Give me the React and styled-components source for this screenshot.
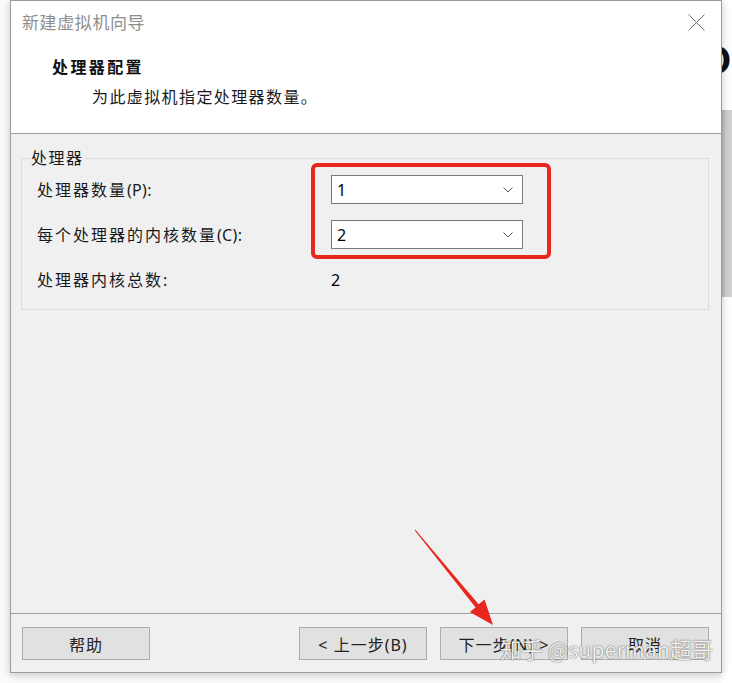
import React from "react";
import styled, { createGlobalStyle } from "styled-components";

const Global = createGlobalStyle`
  html, body { margin: 0; padding: 0; background: #fff; }
  #root { width: 732px; height: 683px; }
`;

const FONT = `"Noto Sans", "Noto Sans CJK SC", sans-serif`;

const Page = styled.div`
  position: relative;
  width: 732px;
  height: 683px;
  overflow: hidden;
  display: flex;
  background: #fbfbfb;
  font-family: ${FONT};
`;

const Window = styled.div`
  flex-shrink: 0;
  margin-left: 10px;
  width: 712px;
  height: 673px;
  box-sizing: border-box;
  border: 1px solid #9c9c9c;
  box-shadow: 0 2px 8px rgba(0, 0, 0, 0.22);
  display: flex;
  flex-direction: column;
  background: #f0f0f0;
  position: relative;
  z-index: 1;
`;

const Backdrop = styled.div`
  flex: 1;
  overflow: hidden;
  display: flex;
  flex-direction: column;
  background: #fff;
`;

const BackGlyph = styled.div`
  margin-top: 36px;
  margin-left: -22px;
  height: 74px;
  font: bold 40px/48px "Liberation Sans", sans-serif;
  color: #111;
`;

const BackPanel = styled.div`
  height: 187px;
  background: linear-gradient(90deg, #b9b9b9 0, #cfcfcf 4px, #d2d2d2 100%);
`;

const TopPane = styled.div`
  height: 132px;
  background: #fff;
  border-bottom: 1px solid #a0a0a0;
  display: flex;
  flex-direction: column;
`;

const TitleBar = styled.div`
  height: 43px;
  display: flex;
  align-items: center;
  justify-content: space-between;
  padding: 0 16px 0 11px;
`;

const Title = styled.div`
  font-size: 17px;
  line-height: 20px;
  color: #8e8e8e;
  letter-spacing: 0.6px;
`;

const Heading = styled.div`
  margin-top: 13px;
  padding-left: 41px;
  font-size: 16px;
  line-height: 20px;
  font-weight: 700;
  letter-spacing: 2.4px;
  color: #111;
`;

const Subtitle = styled.div`
  margin-top: 10px;
  padding-left: 81px;
  font-size: 16px;
  line-height: 20px;
  letter-spacing: 1.4px;
  color: #1a1a1a;
`;

const Body = styled.div`
  flex: 1;
  padding: 15px 12px 0 10px;
`;

const Group = styled.fieldset`
  margin: 0;
  border: 1px solid #dcdcdc;
  padding: 8px 13px 15px 15px;
  min-inline-size: 0;
`;

const Legend = styled.legend`
  font-size: 16px;
  line-height: 18px;
  padding: 0 1px;
  margin-left: -7px;
  letter-spacing: 1.5px;
  color: #1a1a1a;
`;

const Rows = styled.div`
  display: flex;
  flex-direction: column;
  gap: 16px;
`;

const Row = styled.div`
  display: grid;
  grid-template-columns: 294px 192px;
  align-items: center;
  height: 29px;
`;

const Label = styled.div`
  font-size: 16px;
  line-height: 20px;
  letter-spacing: 2px;
  color: #1a1a1a;
`;

const Combo = styled.div`
  box-sizing: border-box;
  height: 29px;
  border: 1px solid #7a7a7a;
  background: #fff;
  display: flex;
  align-items: center;
  justify-content: space-between;
  padding: 0 9px 0 5px;
  font-size: 16px;
  color: #000;
`;

const Value = styled.div`
  font-size: 16px;
  color: #000;
`;

const Footer = styled.div`
  box-sizing: border-box;
  height: 59px;
  border-top: 1px solid #a0a0a0;
  display: flex;
  align-items: flex-start;
  gap: 13px;
  padding: 13px 12px 0 11px;
`;

const Button = styled.button`
  width: 128px;
  height: 33px;
  margin-right: ${(p) => (p.$push ? "auto" : "0")};
  border: 1px solid #adadad;
  background: #e1e1e1;
  font-family: ${FONT};
  font-size: 16px;
  letter-spacing: 1px;
  color: #222;
  padding: 0;
  display: flex;
  align-items: center;
  justify-content: center;
`;

const RedBox = styled.div`
  position: absolute;
  left: 311px;
  top: 163px;
  width: 240px;
  height: 96px;
  box-sizing: border-box;
  border: 4px solid #e8271f;
  border-radius: 6px;
  z-index: 2;
`;

const Arrow = styled.svg`
  position: absolute;
  left: 0;
  top: 0;
  z-index: 3;
  pointer-events: none;
`;

const Watermark = styled.div`
  position: absolute;
  left: 500px;
  top: 634px;
  z-index: 4;
  font-family: "Noto Sans CJK SC", "Noto Sans", sans-serif;
  font-size: 21.5px;
  line-height: 30px;
  color: rgba(255, 255, 255, 0.92);
  text-shadow: 0 0 1px rgba(0, 0, 0, 0.55), 0 0 2px rgba(0, 0, 0, 0.35);
  white-space: nowrap;
`;

const Chevron = () => (
  <svg width="10" height="6" viewBox="0 0 10 6">
    <polyline points="0.5,0.5 5,5 9.5,0.5" fill="none" stroke="#555" strokeWidth="1" />
  </svg>
);

const Close = () => (
  <svg width="17" height="17" viewBox="0 0 17 17">
    <path d="M0.5 0.5 L16.5 16.5 M16.5 0.5 L0.5 16.5" stroke="#6f6f6f" strokeWidth="1" />
  </svg>
);

const Latin = styled.span`
  letter-spacing: 0.3px;
`;

export default function App() {
  return (
    <>
      <Global />
      <Page>
        <Window>
          <TopPane>
            <TitleBar>
              <Title>新建虚拟机向导</Title>
              <Close />
            </TitleBar>
            <Heading>处理器配置</Heading>
            <Subtitle>为此虚拟机指定处理器数量。</Subtitle>
          </TopPane>
          <Body>
            <Group>
              <Legend>处理器</Legend>
              <Rows>
                <Row>
                  <Label>
                    处理器数量<Latin>(P):</Latin>
                  </Label>
                  <Combo>
                    <span>1</span>
                    <Chevron />
                  </Combo>
                </Row>
                <Row>
                  <Label>
                    每个处理器的内核数量<Latin>(C):</Latin>
                  </Label>
                  <Combo>
                    <span>2</span>
                    <Chevron />
                  </Combo>
                </Row>
                <Row>
                  <Label>处理器内核总数:</Label>
                  <Value>2</Value>
                </Row>
              </Rows>
            </Group>
          </Body>
          <Footer>
            <Button $push>帮助</Button>
            <Button>&lt; 上一步(B)</Button>
            <Button>下一步(N) &gt;</Button>
            <Button>取消</Button>
          </Footer>
        </Window>
        <Backdrop>
          <BackGlyph>O</BackGlyph>
          <BackPanel />
        </Backdrop>
        <RedBox />
        <Arrow width="732" height="683" viewBox="0 0 732 683">
          <polygon
            points="414.6,530.3 475.6,607.6 469.8,612.0 493,625 484.6,599.6 478.6,604.2 415.4,529.7"
            fill="#e8271f"
          />
        </Arrow>
        <Watermark>知乎 @superman超哥</Watermark>
      </Page>
    </>
  );
}
